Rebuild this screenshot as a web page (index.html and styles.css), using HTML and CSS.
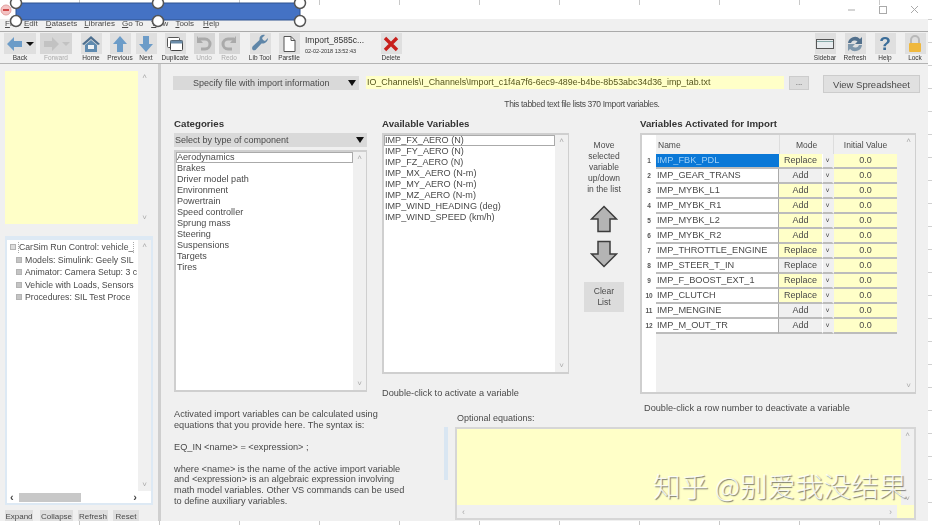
FILE: index.html
```html
<!DOCTYPE html>
<html lang="en">
<head>
<meta charset="utf-8">
<title>CarSim Import Variables</title>
<link rel="stylesheet" href="styles.css">
</head>
<body>
<div class="page">
  <div class="app">
    <div class="titlebar">
      <svg class="winctl" viewBox="0 0 72 10" width="72" height="10"><path d="M0 5h7" stroke="#aaa" fill="none"/><rect x="31.500" y="1.500" width="7" height="7" stroke="#aaa" fill="none"/><path d="M63 1l7 7M70 1l-7 7" stroke="#aaa" fill="none"/></svg>
    </div>
    <nav class="menubar">
      <span class="m-file"><u>F</u>ile</span><span class="m-edit"><u>E</u>dit</span><span class="m-data"><u>D</u>atasets</span><span class="m-lib"><u>L</u>ibraries</span><span class="m-go"><u>G</u>o To</span><span class="m-view"><u>V</u>iew</span><span class="m-tools"><u>T</u>ools</span><span class="m-help"><u>H</u>elp</span>
    </nav>
    <div class="toolbar">
      <div class="group g-first">
        <div class="tool wide"><div class="box split">
          <svg viewBox="0 0 20 20" width="20" height="20"><path d="M2 10l7-7v4h8v6H9v4z" fill="#6c9cc8"/></svg><i class="caret dark"></i></div><span>Back</span></div>
        <div class="tool wide off"><div class="box split">
          <svg viewBox="0 0 20 20" width="20" height="20"><path d="M18 10l-7-7v4H3v6h8v4z" fill="#c2c2c2"/></svg><i class="caret light"></i></div><span>Forward</span></div>
      </div>
      <div class="group g-home">
        <div class="tool"><div class="box"><svg viewBox="0 0 20 20" width="20" height="20"><path d="M10 2L1 10l2 1 7-6 7 6 2-1z" fill="#4d6f8f"/><path d="M4 11l6-5 6 5v7H4z" fill="#5f8bb0"/><rect x="7" y="11" width="6" height="4" fill="#eef2f5"/></svg></div><span>Home</span></div>
      </div>
      <div class="group g-nav">
        <div class="tool"><div class="box"><svg viewBox="0 0 20 20" width="20" height="20"><path d="M10 2l7 8h-4v8H7v-8H3z" fill="#6c9cc8"/></svg></div><span>Previous</span></div>
        <div class="tool"><div class="box"><svg viewBox="0 0 20 20" width="20" height="20"><path d="M10 18l7-8h-4V2H7v8H3z" fill="#6c9cc8"/></svg></div><span>Next</span></div>
      </div>
      <div class="group g-dup">
        <div class="tool"><div class="box"><svg viewBox="0 0 20 20" width="20" height="20"><rect x="2.500" y="3.500" width="12" height="10" rx="1" fill="#fff" stroke="#555"/><rect x="5.500" y="6.500" width="12" height="10" rx="1" fill="#fff" stroke="#444"/><rect x="5.500" y="6.500" width="12" height="3" fill="#6a8ba8"/></svg></div><span>Duplicate</span></div>
      </div>
      <div class="group g-undo">
        <div class="tool off"><div class="box dim"><svg viewBox="0 0 20 20" width="20" height="20"><path d="M5 5h6a5 5 0 0 1 0 10H7" fill="none" stroke="#aaa" stroke-width="3"/><path d="M3 2v7h6z" fill="#aaa"/></svg></div><span>Undo</span></div>
        <div class="tool off"><div class="box dim"><svg viewBox="0 0 20 20" width="20" height="20"><path d="M15 5H9a5 5 0 0 0 0 10h4" fill="none" stroke="#aaa" stroke-width="3"/><path d="M17 2v7h-6z" fill="#aaa"/></svg></div><span>Redo</span></div>
      </div>
      <div class="group g-lib">
        <div class="tool"><div class="box"><svg viewBox="0 0 20 20" width="20" height="20"><path d="M18 4l-3 3-2-1-1-2 3-3c-3-1-6 1-5.500 5L3 12c-2 2-.5 5.500 2.500 4l6-6.500c3 .5 6.500-2 6.500-5.500z" fill="#5f86a8"/></svg></div><span>Lib Tool</span></div>
        <div class="tool"><div class="box"><svg viewBox="0 0 20 20" width="20" height="20"><path d="M5 2.500h7l4 4v11H5z" fill="#fff" stroke="#555"/><path d="M12 2.500v4h4" fill="none" stroke="#555"/></svg></div><span>Parsfile</span></div>
      </div>
      <div class="dataset"><b>Import_8585c...</b><small>02-02-2018 13:52:43</small></div>
      <div class="group g-del">
        <div class="tool"><div class="box"><svg viewBox="0 0 20 20" width="20" height="20"><path d="M4 4l12 12M16 4L4 16" stroke="#c8201c" stroke-width="3.400" fill="none"/></svg></div><span>Delete</span></div>
      </div>
      <div class="group g-right">
        <div class="tool"><div class="box"><svg viewBox="0 0 20 20" width="20" height="20"><rect x="1.500" y="5.500" width="17" height="9" fill="#e8ecef" stroke="#555"/><path d="M2 7.500h16" stroke="#8aa" fill="none"/></svg></div><span>Sidebar</span></div>
        <div class="tool"><div class="box"><svg viewBox="0 0 20 20" width="20" height="20"><path d="M3 9a7 7 0 0 1 12-4l2-2v7h-7l2.500-2.500A4 4 0 0 0 6 9z" fill="#52708c"/><path d="M17 11a7 7 0 0 1-12 4l-2 2v-7h7l-2.500 2.500A4 4 0 0 0 14 11z" fill="#7f97ab"/></svg></div><span>Refresh</span></div>
        <div class="tool"><div class="box"><span class="qmark">?</span></div><span>Help</span></div>
        <div class="tool"><div class="box"><svg viewBox="0 0 20 20" width="20" height="20"><path d="M6 10V6a4 4 0 0 1 8 0v4" fill="none" stroke="#b9b9b9" stroke-width="2"/><rect x="4" y="9" width="12" height="9" rx="1" fill="#efb83e"/></svg></div><span>Lock</span></div>
      </div>
    </div>
    <div class="body">
      <aside class="sidebar">
        <div class="notes"><div class="notes-fill"></div><div class="vscroll notes-scroll"><i>&#708;</i><i>&#709;</i></div></div>
        <div class="tree">
          <div class="tree-main">
            <div class="tree-inner">
              <div class="tree-row root"><i class="node minus"></i><span class="focus">CarSim Run Control: vehicle_</span></div>
              <div class="tree-row"><i class="node"></i><span>Models: Simulink: Geely SIL</span></div>
              <div class="tree-row"><i class="node"></i><span>Animator: Camera Setup: 3 c</span></div>
              <div class="tree-row"><i class="node"></i><span>Vehicle with Loads, Sensors</span></div>
              <div class="tree-row"><i class="node"></i><span>Procedures: SIL Test Proce</span></div>
            </div>
            <div class="vscroll"><i>&#708;</i><i>&#709;</i></div>
          </div>
          <div class="tree-hs"><i>&#8249;</i><b></b><i>&#8250;</i></div>
        </div>
        <div class="tree-btns"><button class="b-exp">Expand</button><button class="b-col">Collapse</button><button class="b-ref">Refresh</button><button class="b-res">Reset</button></div>
      </aside>
      <main class="main">
        <div class="filebar">
          <div class="specify"><span>Specify file with import information</span><i class="caret big"></i></div>
          <div class="path">IO_Channels\I_Channels\Import_c1f4a7f6-6ec9-489e-b4be-8b53abc34d36_imp_tab.txt</div>
          <button class="dots">...</button>
          <button class="spread">View Spreadsheet</button>
        </div>
        <p class="lists-note">This tabbed text file lists 370 Import variables.</p>
        <div class="columns">
          <section class="col-cat">
            <h2>Categories</h2>
            <div class="typesel"><span>Select by type of component</span><i class="caret big"></i></div>
            <div class="listbox cat-list">
              <ul>
                <li class="focus">Aerodynamics</li><li>Brakes</li><li>Driver model path</li><li>Environment</li><li>Powertrain</li><li>Speed controller</li><li>Sprung mass</li><li>Steering</li><li>Suspensions</li><li>Targets</li><li>Tires</li>
              </ul>
              <div class="vscroll"><i>&#708;</i><i>&#709;</i></div>
            </div>
          </section>
          <section class="col-avail">
            <h2>Available Variables</h2>
            <div class="listbox avail-list">
              <ul>
                <li class="focus">IMP_FX_AERO (N)</li><li>IMP_FY_AERO (N)</li><li>IMP_FZ_AERO (N)</li><li>IMP_MX_AERO (N-m)</li><li>IMP_MY_AERO (N-m)</li><li>IMP_MZ_AERO (N-m)</li><li>IMP_WIND_HEADING (deg)</li><li>IMP_WIND_SPEED (km/h)</li>
              </ul>
              <div class="vscroll"><i>&#708;</i><i>&#709;</i></div>
            </div>
            <p class="hint">Double-click to activate a variable</p>
          </section>
          <section class="col-move">
            <p>Move<br>selected<br>variable<br>up/down<br>in the list</p>
            <svg class="arrow a-up" viewBox="0 0 28 28" width="28" height="28"><path d="M14 1.500L26.500 14H20v12.500H8V14H1.500z" fill="#b4b4b4" stroke="#3c3c3c" stroke-width="1.500"/></svg>
            <svg class="arrow a-down" viewBox="0 0 28 28" width="28" height="28"><path d="M14 26.500L26.500 14H20V1.500H8V14H1.500z" fill="#b4b4b4" stroke="#3c3c3c" stroke-width="1.500"/></svg>
            <button class="clear">Clear<br>List</button>
          </section>
          <section class="col-act">
            <h2>Variables Activated for Import</h2>
            <div class="grid-panel">
              <div class="grid-wrap">
                <table class="vars">
                  <colgroup><col class="c-n"><col class="c-name"><col class="c-mode"><col class="c-dd"><col class="c-val"></colgroup>
                  <thead><tr><th class="n"></th><th class="name">Name</th><th class="mode" colspan="2">Mode</th><th class="val">Initial Value</th></tr></thead>
                  <tbody>
                    <tr><td class="n">1</td><td class="name sel">IMP_FBK_PDL</td><td class="mode y">Replace</td><td class="dd">&#709;</td><td class="val">0.0</td></tr>
                    <tr><td class="n">2</td><td class="name">IMP_GEAR_TRANS</td><td class="mode">Add</td><td class="dd">&#709;</td><td class="val">0.0</td></tr>
                    <tr><td class="n">3</td><td class="name">IMP_MYBK_L1</td><td class="mode y">Add</td><td class="dd">&#709;</td><td class="val">0.0</td></tr>
                    <tr><td class="n">4</td><td class="name">IMP_MYBK_R1</td><td class="mode y">Add</td><td class="dd">&#709;</td><td class="val">0.0</td></tr>
                    <tr><td class="n">5</td><td class="name">IMP_MYBK_L2</td><td class="mode y">Add</td><td class="dd">&#709;</td><td class="val">0.0</td></tr>
                    <tr><td class="n">6</td><td class="name">IMP_MYBK_R2</td><td class="mode y">Add</td><td class="dd">&#709;</td><td class="val">0.0</td></tr>
                    <tr><td class="n">7</td><td class="name">IMP_THROTTLE_ENGINE</td><td class="mode y">Replace</td><td class="dd">&#709;</td><td class="val">0.0</td></tr>
                    <tr><td class="n">8</td><td class="name">IMP_STEER_T_IN</td><td class="mode">Replace</td><td class="dd">&#709;</td><td class="val">0.0</td></tr>
                    <tr><td class="n">9</td><td class="name">IMP_F_BOOST_EXT_1</td><td class="mode y">Replace</td><td class="dd">&#709;</td><td class="val">0.0</td></tr>
                    <tr><td class="n">10</td><td class="name">IMP_CLUTCH</td><td class="mode y">Replace</td><td class="dd">&#709;</td><td class="val">0.0</td></tr>
                    <tr><td class="n">11</td><td class="name">IMP_MENGINE</td><td class="mode">Add</td><td class="dd">&#709;</td><td class="val">0.0</td></tr>
                    <tr><td class="n">12</td><td class="name">IMP_M_OUT_TR</td><td class="mode">Add</td><td class="dd">&#709;</td><td class="val">0.0</td></tr>
                  </tbody>
                </table>
              </div>
              <div class="vscroll"><i>&#708;</i><i>&#709;</i></div>
            </div>
          </section>
        </div>
        <div class="lower">
          <div class="help">
            <p>Activated import variables can be calculated using<br>equations that you provide here. The syntax is:</p>
            <p>EQ_IN &lt;name&gt; = &lt;expression&gt; ;</p>
            <p>where &lt;name&gt; is the name of the active import variable<br>and &lt;expression&gt; is an algebraic expression involving<br>math model variables. Other VS commands can be used<br>to define auxiliary variables.</p>
          </div>
          <i class="splitter"></i>
          <div class="eq-col">
            <p class="hint2">Double-click a row number to deactivate a variable</p>
            <label class="eq-label">Optional equations:</label>
            <div class="eq-box">
              <div class="eq-top"><div class="eq-text"></div><div class="vscroll"><i>&#708;</i><i>&#709;</i></div></div>
              <div class="eq-hs"><i>&#8249;</i><i>&#8250;</i></div>
            </div>
          </div>
        </div>
      </main>
    </div>
  </div>
  <svg class="shape" viewBox="0 0 310 30" width="310" height="30">
    <circle cx="6" cy="10" r="5" fill="#f4c4c4" stroke="#e2a0a0"/><path d="M3 10h6" stroke="#cf4a4a" stroke-width="2"/>
    <rect x="16" y="3" width="284" height="17" fill="#4472c4" stroke="#2f528f" stroke-width="1"/>
    <g fill="#fff" stroke="#555" stroke-width="1.500">
      <circle cx="16" cy="3" r="5.500"/><circle cx="158" cy="3" r="5.500"/><circle cx="300" cy="3" r="5.500"/>
      <circle cx="16" cy="21" r="5.500"/><circle cx="158" cy="21" r="5.500"/><circle cx="300" cy="21" r="5.500"/>
    </g>
  </svg>
  <div class="watermark">知乎 @别爱我没结果</div>
</div>
</body>
</html>
```
FILE: styles.css
```css
* { box-sizing: border-box; }
html, body { margin: 0; padding: 0; background: #fff; }
.page {
  position: relative;
  width: 932px;
  height: 525px;
  overflow: hidden;
  background-color: #fff;
  background-image:
    repeating-linear-gradient(90deg, transparent 0 79px, #c8c8c8 79px 80px),
    repeating-linear-gradient(0deg, transparent 0 22px, #d0d0d0 22px 23px);
  font-family: "Liberation Sans", Arial, sans-serif;
  color: #4a4a4a;
}
.app {
  width: 928px;
  height: 521px;
  padding-top: 5px;
  display: flex;
  flex-direction: column;
  overflow: hidden;
  filter: blur(.55px);
  font-size: 9px;
}
p { margin: 0; }
h2 { margin: 0; font-size: 9.700px; font-weight: bold; color: #333; line-height: 12px; }
ul { list-style: none; margin: 0; padding: 0; }
button { font-family: inherit; color: #4a4a4a; padding: 0; }

.titlebar {
  height: 14px;
  background: #fff;
  display: flex;
  justify-content: flex-end;
  align-items: flex-start;
  padding: 0 8px 0 0;
}
.winctl { display: block; }
.menubar {
  height: 13px;
  background: #f0f0f0;
  border-bottom: 1px solid #aaa;
  display: flex;
  font-size: 8px;
  line-height: 10px;
}
.m-file { margin-left: 5px; }
.m-edit { margin-left: 6px; }
.m-data { margin-left: 8px; }
.m-lib { margin-left: 7px; }
.m-go { margin-left: 7px; }
.m-view { margin-left: 8px; }
.m-tools { margin-left: 7px; }
.m-help { margin-left: 9px; }

.toolbar {
  height: 32px;
  background: #f0f0f0;
  border-bottom: 1px solid #b4b4b4;
  display: flex;
  align-items: flex-start;
  padding: 1px 1px 0 0;
}
.group { display: flex; }
.g-first { margin-left: 4px; gap: 4px; }
.g-home { margin-left: 7px; }
.g-nav { margin-left: 5px; gap: 2px; }
.g-dup { margin-left: 5px; }
.g-undo { margin-left: 5px; gap: 1px; }
.g-lib { margin-left: 7px; gap: 5px; }
.g-del { margin-left: 12px; }
.g-right { margin-left: auto; gap: 6px; }
.tool {
  width: 24px;
  display: flex;
  flex-direction: column;
  align-items: center;
  font-size: 6.500px;
  line-height: 8px;
  color: #333;
  white-space: nowrap;
}
.tool.wide { width: 32px; }
.tool.off { color: #aaa; }
.box {
  width: 21px;
  height: 21px;
  background: #dfdfdf;
  display: flex;
  align-items: center;
  justify-content: center;
}
.tool.wide .box { width: 32px; }
.box.split { justify-content: flex-start; gap: 1px; padding-left: 1px; }
.box.dim { background: #d8d8d8; }
.off .box { background: #d6d6d6; }
.qmark { font-size: 19px; font-weight: bold; color: #3b6d99; line-height: 20px; }
.caret {
  display: block;
  width: 0;
  height: 0;
  border-left: 4px solid transparent;
  border-right: 4px solid transparent;
  border-top: 4px solid #111;
}
.caret.light { border-top-color: #c2c2c2; }
.caret.big { border-left-width: 4.500px; border-right-width: 4.500px; border-top-width: 6px; }
.dataset {
  margin-left: 4px;
  width: 62px;
  padding-top: 2px;
  display: flex;
  flex-direction: column;
  gap: 2px;
}
.dataset b { font-weight: normal; font-size: 8.500px; line-height: 10px; color: #333; white-space: nowrap; }
.dataset small { font-size: 5.500px; line-height: 8px; white-space: nowrap; color: #333; }

.body { flex: 1; display: flex; min-height: 0; background: #f0f0f0; }
.sidebar {
  flex: none;
  width: 161px;
  border-right: 3px solid #cfcfcf;
  padding: 7px 0 0 5px;
  display: flex;
  flex-direction: column;
}
.notes { flex: none; width: 146px; height: 153px; display: flex; }
.notes-fill { width: 134px; background: #ffffc8; }
.notes-scroll { width: 12px; background: #e9eef2; }
.tree {
  flex: none;
  width: 148px;
  height: 269px;
  margin-top: 12px;
  padding: 4px 2px 2px;
  background: #dde9f4;
  display: flex;
  flex-direction: column;
}
.tree-main { flex: 1; display: flex; min-height: 0; }
.tree-inner {
  flex: 1;
  min-width: 0;
  background: #fff;
  padding: 1px 0 0 3px;
  font-size: 8.700px;
  line-height: 12.500px;
  overflow: hidden;
  white-space: nowrap;
}
.tree-row { display: flex; align-items: center; padding-left: 6px; gap: 3px; overflow: hidden; }
.tree-row.root { padding-left: 0; }
.node { flex: none; width: 6px; height: 6px; background: #c4c4c4; border: 1px solid #b4b4b4; }
.node.minus { background: #ddd; }
.tree-row .focus { outline: 1px dotted #aaa; }
.tree-hs {
  flex: none;
  height: 12px;
  background: #fff;
  display: flex;
  align-items: center;
  padding: 0 14px 0 3px;
  font-size: 11px;
  font-weight: bold;
  color: #444;
}
.tree-hs i { font-style: normal; }
.tree-hs b { flex: none; width: 62px; height: 9px; margin-left: 5px; margin-right: auto; background: #c8c8c8; }
.tree-btns { display: flex; margin-top: 5px; }
.tree-btns button {
  height: 14px;
  background: #dfdfdf;
  border: 0;
  font-size: 8px;
  line-height: 12px;
  white-space: nowrap;
}
.b-exp { width: 28px; }
.b-col { width: 33px; margin-left: 7px; }
.b-ref { width: 30px; margin-left: 5px; }
.b-res { width: 26px; margin-left: 5px; }

.main {
  flex: 1;
  min-width: 0;
  padding: 12px 8px 0 12px;
  display: flex;
  flex-direction: column;
}
.filebar { display: flex; align-items: flex-start; height: 18px; }
.specify {
  flex: none;
  width: 186px;
  height: 14px;
  background: #d9d9d9;
  display: flex;
  align-items: center;
  padding: 0 3px 0 20px;
  font-size: 9px;
  white-space: nowrap;
  justify-content: space-between;
}
.path {
  flex: none;
  margin-left: 7px;
  width: 418px;
  height: 13px;
  background: #ffffc8;
  font-size: 8.900px;
  line-height: 13px;
  color: #56561e;
  white-space: nowrap;
  overflow: hidden;
  padding-left: 1px;
}
.dots {
  flex: none;
  margin-left: 5px;
  width: 20px;
  height: 14px;
  background: #dcdcdc;
  border: 1px solid #ccc;
  font-size: 8px;
  line-height: 10px;
}
.spread {
  flex: none;
  margin-left: 14px;
  width: 97px;
  height: 18px;
  margin-top: -1px;
  background: #e0e0e0;
  border: 1px solid #ccc;
  font-size: 9.500px;
  white-space: nowrap;
}
.lists-note {
  text-align: center;
  font-size: 8.500px;
  line-height: 12px;
  letter-spacing: -.35px;
  margin: 4px 0 0 109px;
  width: 600px;
}
.columns { display: flex; margin-top: 8px; height: 284px; flex: none; }
.col-cat { width: 193px; margin-left: 1px; }
.col-avail { width: 187px; margin-left: 15px; }
.col-move { width: 40px; margin-left: 15px; margin-top: 22px; display: flex; flex-direction: column; align-items: center; }
.col-act { width: 276px; margin-left: 16px; }
.col-move p { text-align: center; font-size: 8.500px; line-height: 11px; white-space: nowrap; }
.arrow { display: block; }
.a-up { margin-top: 10px; }
.a-down { margin-top: 7px; }
.clear {
  width: 40px;
  height: 30px;
  margin-top: 14px;
  background: #dcdcdc;
  border: 0;
  font-size: 8.500px;
  line-height: 11px;
}
.typesel {
  height: 14px;
  margin-top: 3px;
  background: #d9d9d9;
  display: flex;
  align-items: center;
  justify-content: space-between;
  padding: 0 3px 0 1px;
  font-size: 9px;
}
.listbox {
  display: flex;
  background: #fff;
  border: 2px solid #cfcfcf;
  border-right-width: 1px;
  border-bottom-width: 2px;
}
.listbox ul { flex: 1; font-size: 9.100px; line-height: 11px; min-width: 0; white-space: nowrap; }
.listbox li { padding-left: 1px; }
.listbox li.focus { outline: 1px solid #aaa; outline-offset: -1px; height: 11px; }
.cat-list { height: 242px; margin-top: 3px; }
.avail-list { height: 241px; margin-top: 3px; }
.vscroll {
  flex: none;
  width: 13px;
  background: #f0f0f0;
  display: flex;
  flex-direction: column;
  justify-content: space-between;
  align-items: center;
  color: #aaa;
  font-size: 8px;
  line-height: 12px;
}
.vscroll i { font-style: normal; }
.hint { font-size: 9.200px; line-height: 12px; margin-top: 13px; white-space: nowrap; }
.grid-panel {
  display: flex;
  height: 261px;
  margin-top: 3px;
  border: 2px solid #cfcfcf;
  border-right-width: 1px;
  background: #f0f0f0;
}
.grid-wrap { flex: 1; min-width: 0; background: linear-gradient(90deg, #fff 0 14px, #f0f0f0 14px); }
.vars { border-collapse: separate; border-spacing: 0; width: 255px; table-layout: fixed; font-size: 9px; }
.c-n { width: 14px; }
.c-name { width: 123px; }
.c-mode { width: 43px; }
.c-dd { width: 12px; }
.c-val { width: 63px; }
.vars th { font-weight: normal; height: 19px; padding: 0; background: #f0f0f0; text-align: center; font-size: 8.500px; }
.vars th.n { background: #fff; }
.vars th.name { text-align: left; padding-left: 2px; }
.vars th.mode { border-left: 1px solid #ddd; border-right: 1px solid #ddd; }
.vars td {
  height: 15px;
  padding: 0;
  line-height: 13px;
  border-bottom: 2px solid #bcbcbc;
  white-space: nowrap;
  overflow: hidden;
}
.vars td.n { font-size: 6.500px; text-align: center; background: #fff; border-bottom-color: #fff; font-weight: bold; color: #555; }
.vars td.name { background: #fff; padding-left: 1px; font-size: 9.200px; border-right: 1px solid #aaa; }
.vars td.sel { background: #0a78d7; color: #9fd0f7; border-right: 0; }
.vars td.mode { text-align: center; background: #f0f0f0; }
.vars td.mode.y { background: #ffffc8; }
.vars td.dd { text-align: center; font-size: 7px; background: #f0f0f0; border-left: 1px solid #fff; border-right: 2px solid #f0f0f0; color: #444; }
.vars td.val { text-align: center; background: #ffffc8; }

.lower { display: flex; flex: 1; min-height: 0; }
.help { width: 262px; margin-left: 1px; margin-top: 7px; flex: none; font-size: 9.200px; line-height: 10.900px; }
.help p { margin-bottom: 10.900px; white-space: nowrap; }
.splitter { flex: none; width: 4px; height: 53px; background: #d9e6f2; margin: 25px 0 0 8px; }
.eq-col { flex: 1; margin-left: 7px; min-width: 0; }
.hint2 { margin-left: 189px; font-size: 9.200px; line-height: 12px; height: 12px; white-space: nowrap; }
.eq-label { display: block; margin: -1px 0 0 2px; font-size: 9px; line-height: 10px; height: 10px; }
.eq-box {
  margin-top: 4px;
  width: 461px;
  height: 93px;
  border: 2px solid #d6d6d6;
  background: #ffffc8;
  display: flex;
  flex-direction: column;
}
.eq-top { height: 76px; display: flex; flex: none; }
.eq-text { flex: 1; }
.eq-hs {
  height: 13px;
  flex: none;
  margin-right: 17px;
  background: #f0f0f0;
  display: flex;
  justify-content: space-between;
  align-items: center;
  padding: 0 5px;
  color: #aaa;
  font-size: 9px;
}
.eq-hs i { font-style: normal; }

.shape { position: absolute; left: 0; top: 0; display: block; filter: blur(.3px); }
.watermark {
  position: absolute;
  left: 653px;
  top: 467px;
  font-family: "Noto Sans CJK SC", sans-serif;
  font-size: 27.800px;
  line-height: 36px;
  font-weight: 300;
  white-space: nowrap;
  color: rgba(255, 255, 255, .85);
  text-shadow: 1px 1px 1px rgba(80, 80, 80, .75);
}
```
